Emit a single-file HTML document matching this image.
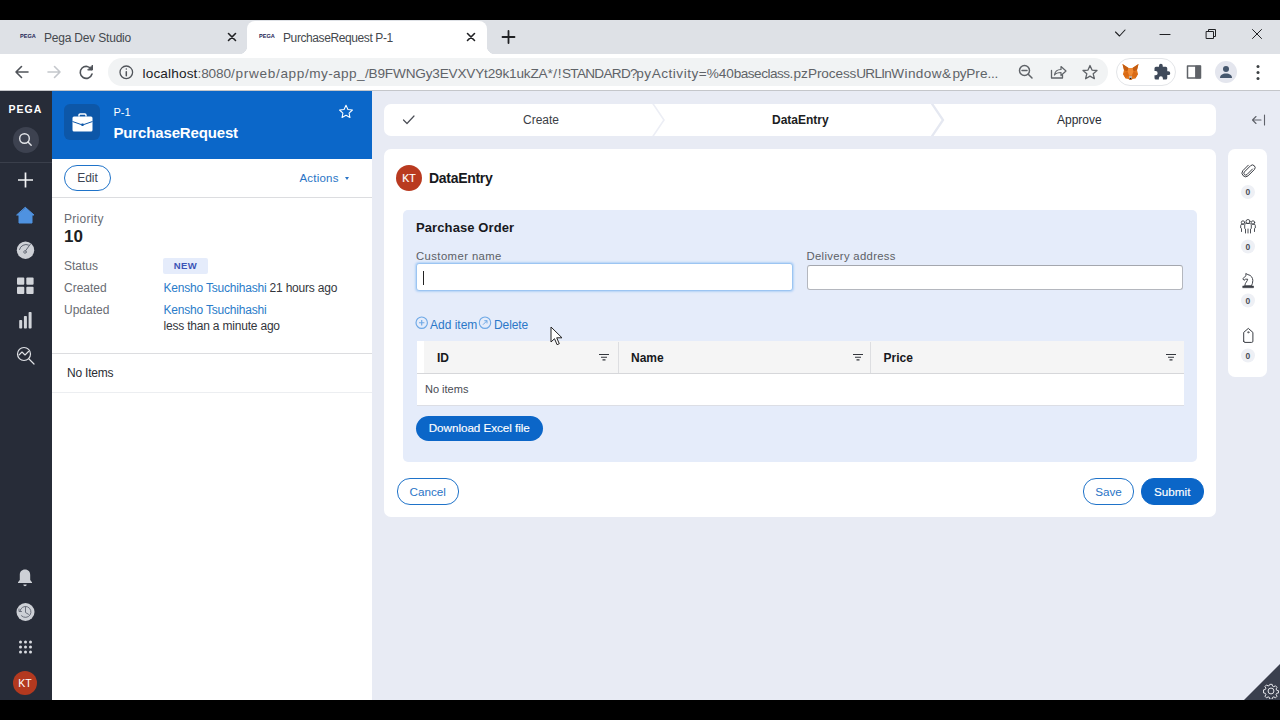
<!DOCTYPE html>
<html><head><meta charset="utf-8">
<style>
*{box-sizing:border-box;margin:0;padding:0}
html,body{width:1280px;height:720px;overflow:hidden;background:#000;font-family:"Liberation Sans",sans-serif;}
.abs{position:absolute}
#tabbar{position:absolute;left:0;top:20px;width:1280px;height:34px;background:#dee1e6}
#toolbar{position:absolute;left:0;top:54px;width:1280px;height:37px;background:#fff}
#page{position:absolute;left:0;top:91px;width:1280px;height:609px;background:#e8ebf4;overflow:hidden}
#nav{position:absolute;left:0;top:0;width:51.500px;height:609px;background:#272c38}
#case{position:absolute;left:51.500px;top:0;width:320.500px;height:609px;background:#fff}
#casehdr{position:absolute;left:0;top:0;width:320.500px;height:68px;background:#0b67c9}
.t{position:absolute;white-space:nowrap;line-height:1}
.lbl{font-size:12px;color:#696c73}.val{font-size:12px;color:#33363c;letter-spacing:-.2px}.lnk{color:#2a7cc9}
.flbl{font-size:11.300px;color:#5c5f66;letter-spacing:.42px}.th{font-size:12px;font-weight:bold;color:#17191d}.btn{height:26.500px;border-radius:13px;border:1px solid #1f73c9;color:#2a74c6;font-size:11.700px;text-align:center;line-height:26px;background:#fff}.cnt{font-size:8.500px;font-weight:bold;color:#4a4d55}
</style></head><body>
<div id="tabbar">
  <div class="abs" style="left:247px;top:1px;width:240px;height:33px;background:#fff;border-radius:8px 8px 0 0"></div>
  <div class="abs" style="left:239px;top:26px;width:8px;height:8px;background:radial-gradient(circle at 0 0,#dee1e6 8px,#fff 8.5px)"></div>
  <div class="abs" style="left:487px;top:26px;width:8px;height:8px;background:radial-gradient(circle at 100% 0,#dee1e6 8px,#fff 8.5px)"></div>
  <div class="t" style="left:44px;top:12px;font-size:12px;letter-spacing:-0.2px;color:#45494e">Pega Dev Studio</div>
  <div class="t" style="left:283px;top:12px;font-size:12px;letter-spacing:-0.4px;color:#45494e">PurchaseRequest P-1</div>
  <div class="t" style="left:20px;top:14px;font-size:5.600px;font-weight:bold;color:#1f2555">PEGA</div>
  <div class="t" style="left:259px;top:14px;font-size:5.600px;font-weight:bold;color:#1f2555">PEGA</div>
  <svg class="abs" style="left:0;top:0" width="1280" height="34" fill="none" stroke="#202124" stroke-width="1.6" stroke-linecap="round" stroke-linejoin="round">
    <path d="M228.5 13.5l7 7M235.5 13.5l-7 7"/>
    <path d="M467.5 13.5l7 7M474.5 13.5l-7 7"/>
    <path d="M508.5 11v12M502.500 17h12" stroke-width="1.8"/>
    <path d="M1115.500 12l4 4 5.500-6" stroke-width="1.100"/>
    <path d="M1160 14.500h10" stroke-width="1.100"/>
    <path d="M1206.500 11.500h7v7h-7zM1208.500 11.500v-2h7v7h-2" stroke-width="1"/>
    <path d="M1252.500 9.500l9 9M1261.500 9.500l-9 9" stroke-width="1"/>
  </svg>
</div>
<div id="toolbar">
  <div class="abs" style="left:108px;top:4px;width:1000px;height:28px;border-radius:14px;background:#f1f3f4"></div>
  <div class="abs" style="left:1116px;top:4px;width:60px;height:28px;border-radius:14px;background:#fff;border:1px solid #e3e5e8"></div>
  <div class="abs" style="left:1215px;top:7px;width:22px;height:22px;border-radius:11px;background:#e4e6ee"></div>
  <div class="t" id="url" style="left:142px;top:13px;font-size:13.6px;color:#5f6368"><span style="position:absolute;left:0.50px;letter-spacing:0.15px;color:#202124">localhost</span><span style="position:absolute;left:55.50px;letter-spacing:-0.11px">:8080</span><span style="position:absolute;left:89.00px;letter-spacing:0.70px">/prweb</span><span style="position:absolute;left:134.00px;letter-spacing:0.63px">/app</span><span style="position:absolute;left:163.00px;letter-spacing:0.42px">/my-app_</span><span style="position:absolute;left:223.00px;letter-spacing:-0.18px">/B9FWNGy3EVXVYt29k1ukZA</span><span style="position:absolute;left:405.50px;letter-spacing:0.55px">*/!</span><span style="position:absolute;left:420.00px;letter-spacing:-0.72px">STANDARD</span><span style="position:absolute;left:488.00px;letter-spacing:-1.31px">?</span><span style="position:absolute;left:494.25px;letter-spacing:0.51px">pyActivity</span><span style="position:absolute;left:556.75px;letter-spacing:-0.04px">=%40</span><span style="position:absolute;left:591.75px;letter-spacing:-0.52px">baseclass</span><span style="position:absolute;left:647.50px;letter-spacing:0.12px">.pz</span><span style="position:absolute;left:666.00px;letter-spacing:-0.12px">Process</span><span style="position:absolute;left:714.25px;letter-spacing:-0.73px">URL</span><span style="position:absolute;left:739.25px;letter-spacing:-0.67px">In</span><span style="position:absolute;left:749.25px;letter-spacing:0.40px">Window</span><span style="position:absolute;left:800.00px;letter-spacing:1.42px">&amp;</span><span style="position:absolute;left:810.50px;letter-spacing:-0.30px">py</span><span style="position:absolute;left:824.25px;letter-spacing:0.03px">Pre</span><span style="position:absolute;left:845.50px;letter-spacing:-0.28px">...</span></div>
  <svg class="abs" style="left:0;top:0" width="1280" height="37" fill="none" stroke="#5f6368" stroke-width="1.600" stroke-linecap="round" stroke-linejoin="round">
    <path d="M28 18H16M21.500 12.500L16 18l5.500 5.500" stroke="#50545a"/>
    <path d="M48 18h12M54.500 12.500L60 18l-5.500 5.500" stroke="#c4c7cc"/>
    <path d="M91.500 15.500A6 6 0 1 0 92 20" stroke="#50545a"/><path d="M92.500 11.500v4.500h-4.500z" fill="#50545a" stroke="#50545a" stroke-width="1"/>
    <circle cx="126.300" cy="18.300" r="6.300" stroke="#50545a" stroke-width="1.300"/><path d="M126.300 17.800v4M126.300 14.900v.2" stroke="#50545a" stroke-width="1.500"/>
    <circle cx="1024.500" cy="16.500" r="5" stroke-width="1.500"/><path d="M1028.500 20.500l3.500 3.500M1022 16.500h5" stroke-width="1.500"/>
    <path d="M1051.500 16.500v7.500h11v-3" stroke-width="1.300"/><path d="M1054.500 21c.5-4 3-5.500 6.500-5.500v-3l5 4.500-5 4.500v-3c-3 0-5 .5-6.500 2.500z" stroke-width="1.200"/>
    <path d="M1090 11.500l2 4.600 5 .4-3.800 3.300 1.200 4.900-4.400-2.600-4.400 2.600 1.200-4.900-3.800-3.300 5-.4z" stroke-width="1.300"/>
    <path d="M1187.500 12h13v12h-13z" stroke-width="1.500"/><path d="M1196 12h4.500v12h-4.500z" fill="#5f6368" stroke-width="1"/>
  </svg>
  <svg class="abs" style="left:1121px;top:9px" width="19" height="18" viewBox="0 0 19 18"><path d="M1.500 1l6 4h4l6-4-1.500 6 1 4-2.500 4.500-3 .5-1 1h-2l-1-1-3-.5L2 11l1-4z" fill="#e2761b"/><path d="M1.500 1l6 4-1 3.500L3 7zM17.500 1l-6 4 1 3.500L16 7z" fill="#c45c10"/><path d="M7.500 5h4l1 3.500-1.500 4h-3l-1.500-4z" fill="#f08b34"/><path d="M6.500 8.500L8 12.500 4.500 15 2 11zM12.500 8.500L11 12.500l3.500 2.500 2.500-4z" fill="#d96a15"/><path d="M8 13h3v2.500l-.5.500h-2l-.5-.5z" fill="#c0ad9e"/><path d="M8.700 15h1.600v1.200H8.700z" fill="#161616"/></svg>
  <svg class="abs" style="left:1153px;top:9px" width="18" height="18" viewBox="0 0 24 24"><path d="M20.500 11H19V7a2 2 0 0 0-2-2h-4V3.500a2.500 2.500 0 0 0-5 0V5H4a2 2 0 0 0-2 2v3.800h1.500a2.700 2.700 0 0 1 0 5.400H2V20a2 2 0 0 0 2 2h3.800v-1.500a2.700 2.700 0 0 1 5.400 0V22H17a2 2 0 0 0 2-2v-4h1.500a2.500 2.500 0 0 0 0-5z" fill="#3f4a5a"/></svg>
  <svg class="abs" style="left:1218px;top:10px" width="16" height="16" viewBox="0 0 16 16" fill="#44566c"><circle cx="8" cy="5" r="3"/><path d="M2 14c0-3 2.500-4.500 6-4.500s6 1.500 6 4.500z"/></svg>
  <svg class="abs" style="left:1255px;top:9px" width="6" height="20" fill="#3c4043"><circle cx="3" cy="3.500" r="1.500"/><circle cx="3" cy="9.500" r="1.500"/><circle cx="3" cy="15.500" r="1.500"/></svg>
</div>
<div class="abs" style="left:0;top:90px;width:1280px;height:1px;background:#c4c6ca;z-index:5"></div>
<div id="page">
  <div id="nav">
    <div class="t" style="left:8.500px;top:12.500px;font-size:10.500px;font-weight:bold;color:#fff;letter-spacing:1px">PEGA</div>
    <div class="abs" style="left:12.500px;top:35.500px;width:26px;height:26px;border-radius:13px;background:#3d4250"></div>
    <div class="abs" style="left:0;top:71px;width:52px;height:1px;background:#3a3f4b"></div>
    <svg class="abs" style="left:0;top:0" width="52" height="609" fill="none" stroke="#d8dbe0" stroke-width="1.500" stroke-linecap="round">
      <circle cx="24.500" cy="47.500" r="4.800" stroke="#e4e6ea" stroke-width="1.400"/><path d="M28 51l3.200 3.200" stroke="#e4e6ea" stroke-width="1.400"/>
      <path d="M25.500 81.500v15M18 89h15" stroke="#f2f3f5" stroke-width="1.700" stroke-linecap="butt"/>
      <path d="M25.500 116.500l8.500 7.500h-2v8h-13v-8h-2z" fill="#4f92e0" stroke="#4f92e0" stroke-width="1" stroke-linejoin="round"/>
      <circle cx="25.500" cy="159.200" r="8.700" fill="#cdd0d6" stroke="none"/><path d="M25 160.500l5.500-7.500M19.500 158.500a6.500 6.500 0 0 1 9-4.500" stroke="#5d6370" stroke-width="1"/><circle cx="25" cy="161" r="1.300" fill="#cdd0d6" stroke="#5d6370" stroke-width=".8"/>
      <g fill="#d2d5da" stroke="none"><rect x="17" y="186.500" width="7.300" height="7.300" rx="1"/><rect x="26.300" y="186.500" width="7.300" height="7.300" rx="1"/><rect x="17" y="195.700" width="7.300" height="7.300" rx="1"/><rect x="26.300" y="195.700" width="7.300" height="7.300" rx="1"/>
      <rect x="19.200" y="229" width="3" height="8.500" rx=".8"/><rect x="23.900" y="225" width="3" height="12.500" rx=".8"/><rect x="28.600" y="221" width="3" height="16.500" rx=".8"/></g>
      <circle cx="24" cy="263" r="6.500" stroke="#e0e2e6" stroke-width="1.200"/><path d="M29 268l5 5" stroke="#e0e2e6" stroke-width="1.200"/><path d="M19 264l3-3 3 3 3.500-3.500" stroke="#e0e2e6" stroke-width="1.100" stroke-linejoin="round"/>
      <path d="M25 478.500c3.300 0 5.200 2.300 5.200 5.500v5l1.800 2.300v.7H18v-.7l1.800-2.300v-5c0-3.200 1.900-5.500 5.200-5.500zM23.300 493.500h3.400a1.700 1.700 0 0 1-3.400 0z" fill="#cdd0d6" stroke="none"/>
      <circle cx="25.500" cy="521" r="9" fill="#cdd0d6" stroke="none"/><path d="M25.500 516v5.500l3 1.800M20 520a5.500 5.500 0 1 1 1.500 4.800M19 518v2.500h2.500" stroke="#6a6f7b" stroke-width="1" stroke-linejoin="round"/>
      <g fill="#d8dbe0" stroke="none"><circle cx="20.500" cy="551" r="1.500"/><circle cx="25.500" cy="551" r="1.500"/><circle cx="30.500" cy="551" r="1.500"/><circle cx="20.500" cy="556" r="1.500"/><circle cx="25.500" cy="556" r="1.500"/><circle cx="30.500" cy="556" r="1.500"/><circle cx="20.500" cy="561" r="1.500"/><circle cx="25.500" cy="561" r="1.500"/><circle cx="30.500" cy="561" r="1.500"/></g>
    </svg>
    <div class="abs" style="left:13px;top:580px;width:24px;height:24px;border-radius:12px;background:#b3391f;color:#fff;font-size:10.500px;text-align:center;line-height:24px">KT</div>
  </div>
  <div id="case"><div class="abs" style="left:.5px;top:0;width:320px;height:609px">
    <div id="casehdr" style="left:-.5px">
      <div class="abs" style="left:12px;top:13px;width:36px;height:36px;border-radius:6px;background:#0d57a8"></div>
      <svg class="abs" style="left:20px;top:22px" width="21" height="19" viewBox="0 0 21 19"><path d="M7 3.500V2.200c0-.7.500-1.200 1.200-1.200h4.600c.7 0 1.200.5 1.200 1.200v1.300" fill="none" stroke="#fff" stroke-width="1.400"/><rect x="0.500" y="3.500" width="20" height="15" rx="1.500" fill="#fff"/><path d="M.5 8.500l10 3.500 10-3.500" fill="none" stroke="#0d57a8" stroke-width="1"/><rect x="9.500" y="10.500" width="2" height="2.500" fill="#0d57a8"/></svg>
      <div class="t" id="pid" style="left:62px;top:16px;font-size:11px;color:#fff">P-1</div>
      <div class="t" id="ptitle" style="left:62px;top:34px;font-size:15px;font-weight:bold;color:#fff;letter-spacing:-.15px">PurchaseRequest</div>
      <svg class="abs" style="left:286px;top:13px" width="16" height="15" viewBox="0 0 18 17"><path d="M9 1.500l2.200 4.700 5.100.6-3.800 3.500 1 5-4.500-2.500-4.500 2.500 1-5L1.700 6.800l5.100-.6z" fill="none" stroke="#fff" stroke-width="1.200" stroke-linejoin="round"/></svg>
    </div>
    <div class="abs" style="left:12px;top:74px;width:47px;height:26px;border-radius:13px;border:1px solid #1f73c9;color:#3d4654;font-size:12px;text-align:center;line-height:24px">Edit</div>
    <div class="t" id="actions" style="left:247.500px;top:81.500px;font-size:11.500px;letter-spacing:.2px;color:#2a74c6">Actions</div>
    <div class="abs" style="left:293px;top:86px;width:0;height:0;border-left:2.500px solid transparent;border-right:2.500px solid transparent;border-top:3px solid #2a74c6"></div>
    <div class="abs" style="left:0;top:106px;width:320px;height:1px;background:#dcdde0"></div>
    <div class="t lbl" style="left:12px;top:121.500px;letter-spacing:.3px">Priority</div>
    <div class="t" id="ten" style="left:12px;top:137px;font-size:17px;font-weight:bold;color:#1d1f24">10</div>
    <div class="t lbl" style="left:12px;top:168.500px">Status</div>
    <div class="abs" style="left:111px;top:166.500px;width:45px;height:16px;background:#e5ecfb;border-radius:2px;color:#3c55b6;font-size:9.500px;font-weight:bold;text-align:center;line-height:16px;letter-spacing:.5px">NEW</div>
    <div class="t lbl" style="left:12px;top:190.500px">Created</div>
    <div class="t val" id="cr" style="left:111.500px;top:190.500px"><span class="lnk">Kensho Tsuchihashi</span> 21 hours ago</div>
    <div class="t lbl" style="left:12px;top:212.500px">Updated</div>
    <div class="t val" style="left:111.500px;top:212.500px"><span class="lnk">Kensho Tsuchihashi</span></div>
    <div class="t val" id="ltm" style="left:111.500px;top:228.500px">less than a minute ago</div>
    <div class="abs" style="left:0;top:262px;width:320px;height:1px;background:#dcdde0"></div>
    <div class="t val" id="noit" style="left:15px;top:276px;color:#2a2d33">No Items</div>
    <div class="abs" style="left:0;top:301px;width:320px;height:1px;background:#eceef1"></div>
  </div></div>
  <div class="abs" style="left:384px;top:13px;width:832px;height:32px;background:#fff;border-radius:7px"></div>
  <svg class="abs" style="left:384px;top:13px" width="832" height="32" fill="none" stroke="#eceef5" stroke-width="1.600"><path d="M268.500 -1l11.500 17-11.500 17"/><path d="M547.500 -1l11.500 17-11.500 17" stroke="#e5e8f1" stroke-width="2.300"/><path d="M19.500 16l3.500 3.500 7-7.500" stroke="#4a4d55" stroke-width="1.200" stroke-linecap="round" stroke-linejoin="round"/></svg>
  <div class="t" id="s1" style="left:523px;top:23px;font-size:12px;color:#3b3e45">Create</div>
  <div class="t" id="s2" style="left:772px;top:23px;font-size:12px;font-weight:bold;color:#1b1d22;letter-spacing:0">DataEntry</div>
  <div class="t" id="s3" style="left:1057px;top:23px;font-size:12px;color:#2b2e35">Approve</div>
  <svg class="abs" style="left:1251px;top:23px" width="16" height="12" fill="none" stroke="#5f626a" stroke-width="1.100" stroke-linecap="round" stroke-linejoin="round"><path d="M10 6H1.500M5 2.500L1.500 6 5 9.500M13.500 1v10"/></svg>
  <div class="abs" style="left:384px;top:58px;width:832px;height:368px;background:#fff;border-radius:7px"></div>
  <div class="abs" style="left:1228px;top:58px;width:39px;height:227.500px;background:#fff;border-radius:7px"></div>
  <div class="abs" style="left:396px;top:73.500px;width:26px;height:26px;border-radius:13px;background:#b93a20;color:#fff;-webkit-text-stroke:.2px #fff;font-size:10.500px;text-align:center;line-height:26px">KT</div>
  <div class="t" id="de" style="left:429px;top:80px;font-size:14px;font-weight:bold;color:#17191d;letter-spacing:-.3px">DataEntry</div>
  <div class="abs" style="left:403px;top:119px;width:794px;height:252px;background:#e5ecfa;border-radius:5px"></div>
  <div class="t" id="po" style="left:416px;top:130px;font-size:13px;font-weight:bold;color:#17191d;letter-spacing:.1px">Parchase Order</div>
  <div class="t flbl" id="cn" style="left:416px;top:160.200px">Customer name</div>
  <div class="t flbl" id="da" style="left:806.500px;top:160.200px;letter-spacing:.32px">Delivery address</div>
  <div class="abs" style="left:415.500px;top:172px;width:377.500px;height:28px;background:#fff;border:1px solid #9cc5f2;border-radius:3px;box-shadow:0 0 2px 1px #b4d3f6"></div>
  <div class="abs" style="left:423px;top:180px;width:1px;height:14px;background:#222"></div>
  <div class="abs" style="left:806.500px;top:173.500px;width:376.500px;height:25.500px;background:#fff;border:1px solid #b4b7be;border-top-color:#a4a7ae;border-radius:3px"></div>
  <svg class="abs" style="left:415px;top:225px" width="80" height="14" fill="none" stroke="#6fa9e6" stroke-width="1.150"><circle cx="6.700" cy="6.700" r="5.700"/><path d="M6.700 4v5.400M4 6.700h5.400"/><circle cx="70" cy="6.700" r="5.700"/><path d="M68 8.700l4-4M69.300 4.700h2.700v2.700" stroke-width="1"/></svg>
  <div class="t" id="ai" style="left:430px;top:227.500px;font-size:12px;color:#2b78c8;letter-spacing:0">Add item</div>
  <div class="t" id="dl" style="left:494px;top:227.500px;font-size:12px;color:#2b78c8;letter-spacing:-.1px">Delete</div>
  <div class="abs" style="left:416.500px;top:250px;width:767px;height:32.500px;background:#f5f5f5;border-bottom:1px solid #d6d7da"></div>
  <div class="abs" style="left:416.500px;top:250px;width:7.500px;height:31.500px;background:#fff"></div>
  <div class="abs" style="left:617.500px;top:250.500px;width:1px;height:31px;background:#dddee1"></div>
  <div class="abs" style="left:870px;top:250.500px;width:1px;height:31px;background:#dddee1"></div>
  <div class="abs" style="left:416.500px;top:282.500px;width:767px;height:32px;background:#fff;border-bottom:1px solid #dcdee5"></div>
  <div class="t th" style="left:437px;top:260.500px">ID</div>
  <div class="t th" style="left:631px;top:260.500px">Name</div>
  <div class="t th" id="pr" style="left:883.500px;top:260.500px">Price</div>
  <svg class="abs" style="left:599px;top:262.500px" width="10" height="7" stroke="#33363c" stroke-width="1.100" fill="none"><path d="M0 .5h10M2 3.200h6M3.500 5.900h3" /></svg>
  <svg class="abs" style="left:852.500px;top:262.500px" width="10" height="7" stroke="#33363c" stroke-width="1.100" fill="none"><path d="M0 .5h10M2 3.200h6M3.500 5.900h3" /></svg>
  <svg class="abs" style="left:1166px;top:262.500px" width="10" height="7" stroke="#33363c" stroke-width="1.100" fill="none"><path d="M0 .5h10M2 3.200h6M3.500 5.900h3" /></svg>
  <div class="t" id="ni" style="left:425px;top:293px;font-size:11px;color:#484b53">No items</div>
  <div class="abs" id="dlb" style="left:416px;top:324.500px;width:126.500px;height:25px;border-radius:12.500px;background:#0b66c8;color:#fff;font-size:11.700px;text-align:center;line-height:24.500px;letter-spacing:-.05px;-webkit-text-stroke:.15px #fff">Download Excel file</div>
  <div class="abs btn" style="left:396.500px;top:387px;width:62.500px">Cancel</div>
  <div class="abs btn" style="left:1083px;top:387px;width:51px">Save</div>
  <div class="abs btn" style="left:1141px;top:387px;width:62.500px;background:#0b66c8;border-color:#0b66c8;color:#fff;-webkit-text-stroke:.15px #fff">Submit</div>
  <svg class="abs" style="left:550px;top:235px" width="14" height="20" viewBox="0 0 14 20"><path d="M1 1v15l3.500-3.300 2.600 6 2.200-1-2.600-5.900H12z" fill="#fff" stroke="#222" stroke-width="1" stroke-linejoin="round"/></svg>
  <svg class="abs" style="left:1228px;top:58px" width="40" height="228" fill="none" stroke="#3a3d44" stroke-width="1" stroke-linecap="round" stroke-linejoin="round">
    <g fill="#eef0f5" stroke="none"><circle cx="20" cy="43" r="7"/><circle cx="20" cy="97.500" r="7"/><circle cx="20" cy="151.500" r="7"/><circle cx="20" cy="206.500" r="7"/></g>
    <path d="M24.500 20l-5.500 5.500a1.800 1.800 0 0 1-2.600-2.600l6.300-6.300a2.700 2.700 0 0 1 3.800 3.800l-6.500 6.500a3.700 3.700 0 0 1-5.200-5.200l5.500-5.500"/>
    <g stroke-width=".9"><circle cx="20" cy="72.500" r="2"/><circle cx="15" cy="73.500" r="1.700"/><circle cx="25" cy="73.500" r="1.700"/><path d="M17.500 84v-4l-.8-.5v-3.500c0-1 .8-1.500 1.600-1.500h3.400c.8 0 1.600.5 1.600 1.500v3.500l-.8.500v4M20 80v4M13.500 82.500v-3l-.8-.5v-2.500c0-.8.600-1.300 1.300-1.300h1.500M26.500 82.500v-3l.8-.5v-2.500c0-.8-.6-1.300-1.300-1.300h-1.500"/></g>
    <path d="M15 138.700h10.500v-1.700H15z" fill="#3a3d44" stroke-width=".6"/><path d="M16.800 136.500c.2-3 2.700-4 2.900-6.300h-2.200l-1.500 1.100-1.200-1.600 3.200-3-.2-2.200 2.100 1.100c3.300.5 4.900 3.300 4.900 5.900 0 2-.5 3.600-1.200 5z" stroke-width=".95"/>
    <path d="M15.700 192.200v-8.800l4.600-4 4.600 4v8.800a1.200 1.200 0 0 1-1.200 1.200h-6.800a1.200 1.200 0 0 1-1.200-1.200z" stroke-width="1"/><circle cx="20.300" cy="183.300" r=".7" stroke-width=".7"/>
  </svg>
  <div class="t cnt" style="left:1245.500px;top:97px">0</div>
  <div class="t cnt" style="left:1245.500px;top:151.500px">0</div>
  <div class="t cnt" style="left:1245.500px;top:205.500px">0</div>
  <div class="t cnt" style="left:1245.500px;top:260.500px">0</div>
  <div class="abs" style="left:1244px;top:573px;width:0;height:0;border-left:36px solid transparent;border-bottom:36px solid #3a3f4d"></div>
  <svg class="abs" style="left:1263px;top:591.500px" width="16" height="16" viewBox="0 0 18 18" fill="none" stroke="#e8eaee" stroke-width="1.100"><circle cx="9" cy="9" r="3.300"/><path d="M7.700 1.500h2.600l.4 2 1.500.7 1.800-1.100 1.800 1.800-1.100 1.800.7 1.500 2 .4v2.600l-2 .4-.7 1.500 1.100 1.800-1.800 1.800-1.800-1.100-1.500.7-.4 2H7.700l-.4-2-1.500-.7-1.800 1.100-1.800-1.800 1.100-1.800-.7-1.500-2-.4V7.700l2-.4.7-1.500-1.100-1.800 1.800-1.800 1.800 1.100 1.500-.7z" stroke-linejoin="round"/></svg>
</div>
</body></html>
